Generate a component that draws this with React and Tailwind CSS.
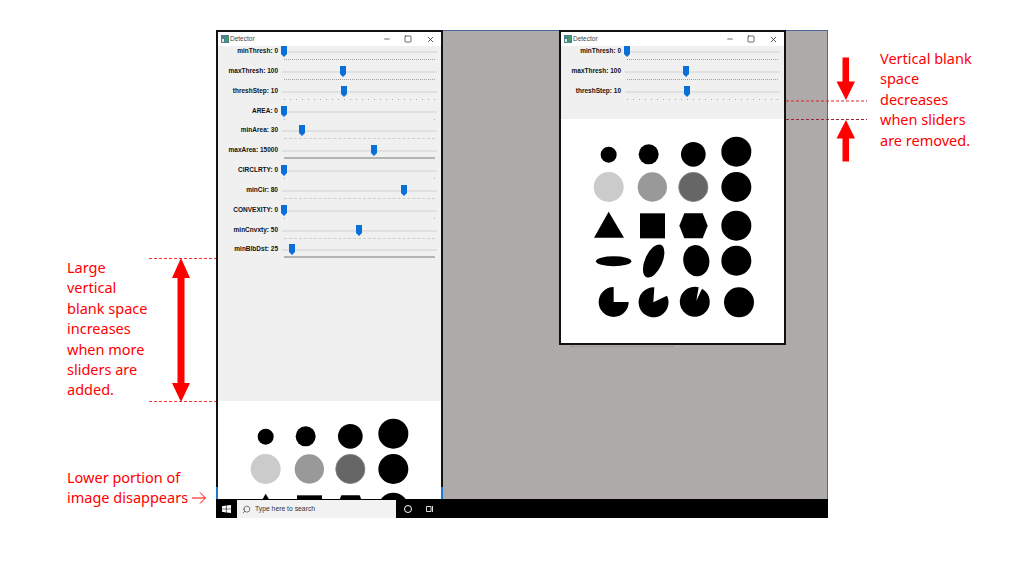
import React from 'react';
import { Search, Minus, Square, X } from 'lucide-react';

const allSliders = [
    { label: 'minThresh: 0', x: 2, ticks: 'dotted' },
    { label: 'maxThresh: 100', x: 61, ticks: 'dotted' },
    { label: 'threshStep: 10', x: 62, ticks: 'sparse' },
    { label: 'AREA: 0', x: 2, ticks: 'ends' },
    { label: 'minArea: 30', x: 20, ticks: 'dashed' },
    { label: 'maxArea: 15000', x: 92, ticks: 'solid' },
    { label: 'CIRCLRTY: 0', x: 2, ticks: 'ends' },
    { label: 'minCir: 80', x: 122, ticks: 'dashed' },
    { label: 'CONVEXITY: 0', x: 2, ticks: 'ends' },
    { label: 'minCnvxty: 50', x: 77, ticks: 'dashed' },
    { label: 'minBlbDst: 25', x: 10, ticks: 'solid' },
];

const Ticks = ({ kind }) => {
    if (kind === 'solid') return <div className="h-[2px] bg-[#b4b4b4]" />;
    if (kind === 'dotted') return <div className="border-t border-dotted border-[#a0a0a0] mt-[1px]" />;
    if (kind === 'dashed') return <div className="border-t border-dashed border-[#cfcfcf] mt-[1px]" />;
    const count = kind === 'ends' ? 2 : 26;
    return (
        <div className="flex justify-between mt-[1px]">
            {Array.from({ length: count }).map((_, i) => (
                <span key={i} className="w-px h-px bg-[#a8a8a8]" />
            ))}
        </div>
    );
};

const SliderRow = ({ label, x, ticks }) => (
    <div className="flex h-[19.85px] items-start">
        <div className="w-[60px] shrink-0 text-right text-[6.5px] leading-[10px] font-bold text-[#111] whitespace-nowrap font-['Liberation_Sans',sans-serif]">
            {label}
        </div>
        <div className="relative ml-[4px] w-[155px] h-[19px]">
            <div className="absolute left-0 right-0 top-[5px] h-[2px] bg-[#e0e0e0]" />
            <div className="absolute left-[2px] right-[2px] top-[12px]">
                <Ticks kind={ticks} />
            </div>
            <svg className="absolute top-0" style={{ left: x - 3 }} width="6" height="11" viewBox="0 0 6 11">
                <path d="M0 0H6V8L3 11L0 8Z" fill="#0b6fd8" />
            </svg>
        </div>
    </div>
);

// the blob test image, coordinates taken at 3x
const BlobImage = () => (
    <svg className="block shrink-0" width="223" height="224" viewBox="18 -33 669 672">
        <circle cx="161" cy="74" r="24" fill="#000" />
        <circle cx="281" cy="73" r="30" fill="#000" />
        <circle cx="415" cy="73" r="37" fill="#000" />
        <circle cx="544" cy="65" r="45" fill="#000" />
        <circle cx="161" cy="171" r="45" fill="#cbcbcb" />
        <circle cx="292" cy="171" r="44" fill="#999" />
        <circle cx="415" cy="171" r="44" fill="#666" stroke="#888" strokeWidth="2" />
        <circle cx="544" cy="171" r="45" fill="#000" />
        <path d="M161 245L207 323H117Z" fill="#000" />
        <rect x="255" y="250" width="75" height="75" fill="#000" />
        <path d="M373 287L388 250H443L458 287L443 325H388Z" fill="#000" />
        <circle cx="544" cy="287" r="45" fill="#000" />
        <ellipse cx="176" cy="394" rx="53" ry="15" fill="#000" />
        <ellipse cx="296" cy="393" rx="26" ry="53" transform="rotate(24 296 393)" fill="#000" />
        <ellipse cx="424" cy="392" rx="39" ry="47" transform="rotate(-10 424 392)" fill="#000" />
        <circle cx="544" cy="392" r="45" fill="#000" />
        <path d="M176 516V471A45 45 0 1 0 221 516Z" fill="#000" />
        <path d="M295 517L298 472A45 45 0 1 0 336 497Z" fill="#000" />
        <path d="M424 512L431 472A45 45 0 1 0 441 476Z" fill="#000" />
        <circle cx="552" cy="517" r="45" fill="#000" />
    </svg>
);

const DetectorWindow = ({ className, sliders, panelHeight }) => (
    <div className={`absolute w-[227px] flex flex-col overflow-hidden border-x-2 border-t-2 border-[#111] bg-white ${className}`}>
        <div className="h-[14px] shrink-0 flex items-center bg-white pl-[3px]">
            <svg width="8" height="8" viewBox="0 0 8 8">
                <rect width="8" height="8" fill="#4d7f8f" />
                <rect x="4" y="1" width="3" height="6" fill="#3f9a6e" />
                <rect x="1" y="4" width="2" height="3" fill="#dfe6ea" />
            </svg>
            <span className="ml-[1px] text-[6.5px] text-[#444] font-['Liberation_Sans',sans-serif]">Detector</span>
            <div className="ml-auto flex items-center text-[#222]">
                <Minus size={8} strokeWidth={2} className="mr-[13px]" />
                <Square size={8} strokeWidth={2} className="mr-[14px]" />
                <X size={9} strokeWidth={2} className="mr-[6px]" />
            </div>
        </div>
        <div className={`shrink-0 bg-[#f0f0f0] ${panelHeight}`}>
            {sliders.map((s) => <SliderRow key={s.label} {...s} />)}
        </div>
        <BlobImage />
    </div>
);

const Taskbar = () => (
    <div className="h-[19px] shrink-0 bg-black flex items-center">
        <div className="w-[21px] flex justify-center">
            <svg width="9" height="8" viewBox="0 0 9 8">
                <path d="M0 1.2L3.9 0.6V3.8H0ZM4.5 0.5L9 0V3.8H4.5ZM0 4.3H3.9V7.4L0 6.8ZM4.5 4.3H9V8L4.5 7.5Z" fill="#fff" />
            </svg>
        </div>
        <div className="w-[159px] h-[18px] self-end bg-[#f2f2f2] flex items-center pl-[5px]">
            <Search size={9} strokeWidth={1.5} className="text-[#222] -scale-x-100" />
            <span className="ml-[4px] text-[6.8px] text-[#333] font-['Liberation_Sans',sans-serif]">Type here to search</span>
        </div>
        <div className="ml-[8px] w-[8px] h-[8px] rounded-full border border-white" />
        <svg className="ml-[14px]" width="8" height="8" viewBox="0 0 8 8">
            <path d="M0.5 1.5H5V6.5H0.5ZM6.5 1V7" fill="none" stroke="#ddd" />
        </svg>
    </div>
);

const Note = ({ className, lines }) => (
    <div className={`absolute text-[14.5px] leading-[20.4px] text-[#ff0000] whitespace-nowrap font-['Noto_Sans',sans-serif] ${className}`}>
        {lines.map((l) => <div key={l}>{l}</div>)}
    </div>
);

const Arrows = () => (
    <svg className="absolute inset-0 pointer-events-none" width="1024" height="576" viewBox="0 0 1024 576">
        <path d="M149 258.5H216M149 401.5H216" stroke="#ff3030" strokeWidth="1" strokeDasharray="3 2" />
        <path d="M181 258L190 278H184.5V383H190L181 402L172 383H177.5V278H172Z" fill="#ff0000" />
        <path d="M786 101H867" stroke="#e0202a" strokeWidth="1" strokeDasharray="3 2" />
        <path d="M786 119.5H867" stroke="#a02038" strokeWidth="1" strokeDasharray="3 2" />
        <path d="M842.5 57.5H849V81.5H855L846 100L836.5 81.5H842.5Z" fill="#ff0000" />
        <path d="M846 120L855 138.5H849V161.5H842.5V138.5H836.5Z" fill="#ff0000" />
        <path d="M192 498H205M200 492.5L205.5 498L200 503.5" fill="none" stroke="#ff0000" strokeWidth="1" />
    </svg>
);

export default function App() {
    return (
        <div className="relative w-[1024px] h-[576px] bg-white overflow-hidden">
            <div className="absolute left-[216px] top-[30px] w-[612px] h-[488px] flex flex-col">
                <div className="relative flex-1 bg-[#aeaaa9] border-t border-r border-[#4a6a9c]">
                    <DetectorWindow className="-top-px left-0 h-[469px]" sliders={allSliders} panelHeight="h-[355px]" />
                    <DetectorWindow className="-top-px left-[343px] h-[315px] border-b-2" sliders={allSliders.slice(0, 3)} panelHeight="h-[73px]" />
                    <div className="absolute left-0 bottom-0 w-[2px] h-[12px] bg-[#1a78d0]" />
                    <div className="absolute left-[225px] bottom-0 w-[2px] h-[12px] bg-[#1a78d0]" />
                    <div className="absolute left-[355px] top-[315px] w-[102px] border-t border-dotted border-[#8a8a8a]" />
                </div>
                <Taskbar />
            </div>
            <Arrows />
            <Note className="left-[67px] top-[257px]" lines={['Large', 'vertical', 'blank space', 'increases', 'when more', 'sliders are', 'added.']} />
            <Note className="left-[67px] top-[467px]" lines={['Lower portion of', 'image disappears']} />
            <Note className="left-[880px] top-[48px]" lines={['Vertical blank', 'space', 'decreases', 'when sliders', 'are removed.']} />
        </div>
    );
}
